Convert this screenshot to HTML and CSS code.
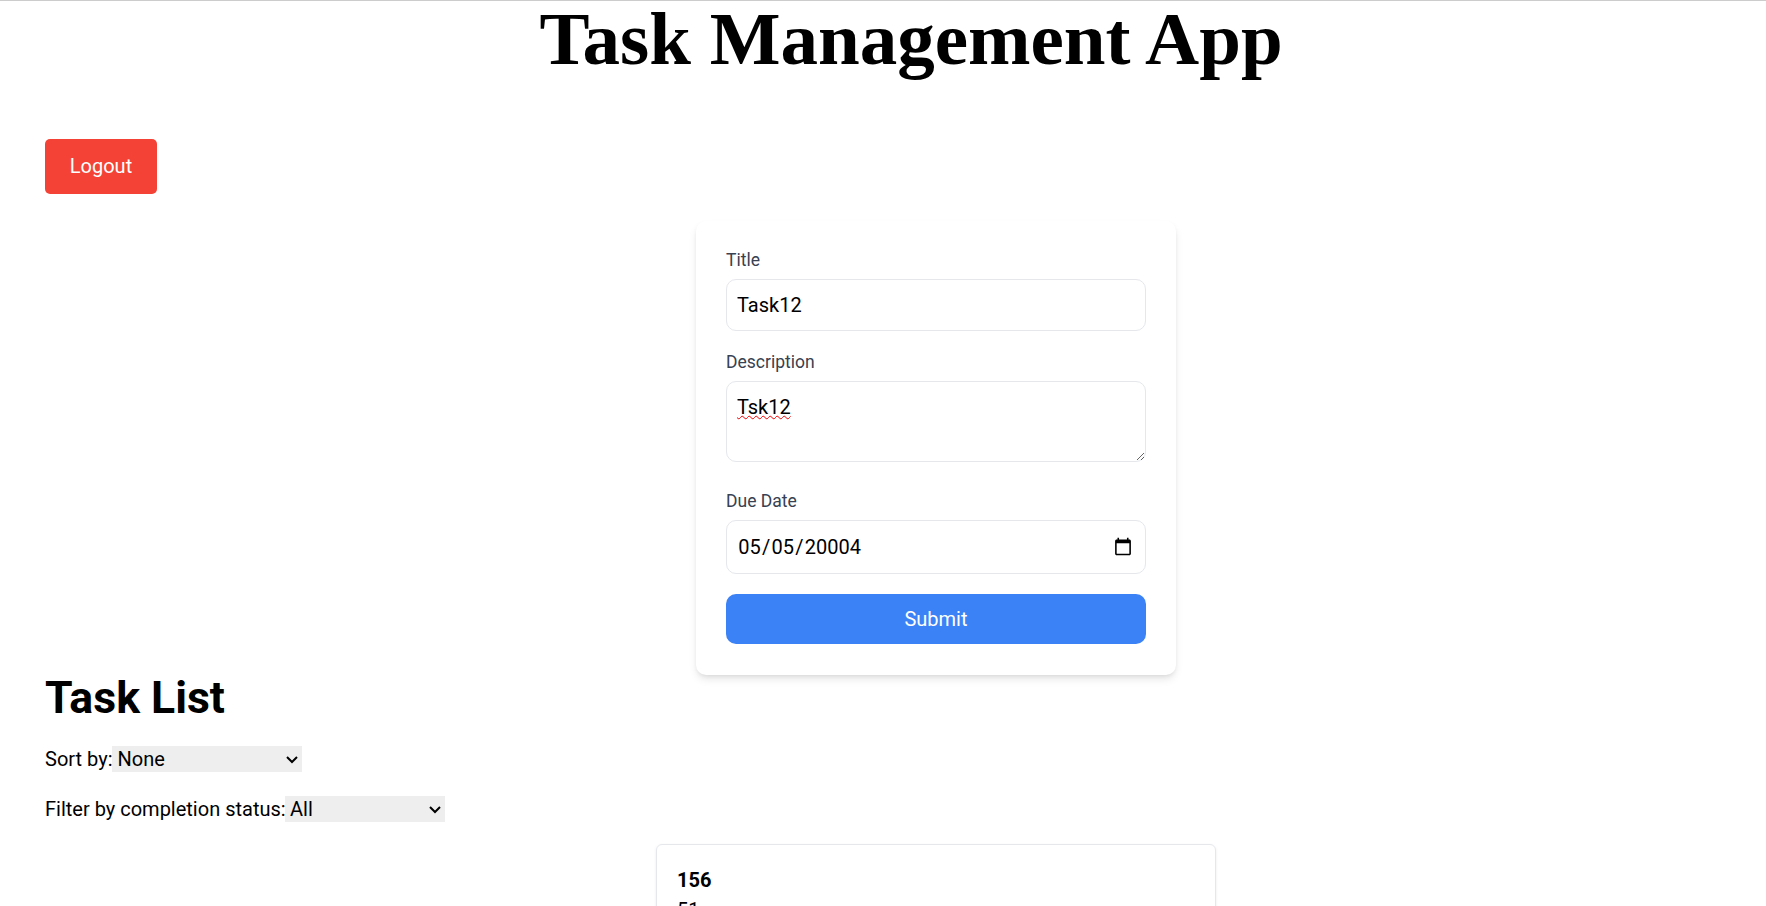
FILE: index.html
```html
<!DOCTYPE html>
<html lang="en">
<head>
    <meta charset="UTF-8">
    <meta name="viewport" content="width=device-width, initial-scale=1.0">
    <title>Task Management App</title>
    <link rel="stylesheet" href="styles.css">
</head>
<body>
    <div class="app">
        <h1 class="app-title">Task Management App</h1>
        <button class="logout-btn" type="button">Logout</button>

        <div class="form-wrap">
            <form class="task-form">
                <div class="field">
                    <label for="title">Title</label>
                    <input id="title" type="text" value="Task12">
                </div>
                <div class="field">
                    <label for="description">Description</label>
                    <textarea id="description">Tsk12</textarea>
                </div>
                <div class="field">
                    <label for="due">Due Date</label>
                    <input id="due" class="date-input" type="date" value="20004-05-05">
                </div>
                <button class="submit-btn" type="button">Submit</button>
            </form>
        </div>

        <h2 class="list-title">Task List</h2>
        <div class="list-control">
            <label for="sort">Sort by:</label><select id="sort" class="sort-select"><option>None</option><option>Due date</option></select>
        </div>
        <div class="list-control">
            <label for="filter">Filter by completion status:</label><select id="filter" class="filter-select"><option>All</option><option>Completed</option></select>
        </div>

        <div class="task-wrap">
            <div class="task-card">
                <h3>156</h3>
                <p>51</p>
            </div>
        </div>
    </div>
</body>
</html>
```

FILE: styles.css
```css
html, body {
    margin: 0;
    padding: 0;
}

body {
    font-family: Roboto, sans-serif;
    color: #000;
    background-color: #fff;
    border-top: 1px solid #ccc;
}

.app {
    box-sizing: border-box;
    height: 905px;
    overflow: hidden;
    padding-left: 45px;
}

.app-title {
    margin: 0 0 0 11px;
    font-family: "Liberation Serif", serif;
    font-size: 75px;
    line-height: 75px;
    font-weight: bold;
    text-align: center;
}

.logout-btn {
    display: block;
    width: 112px;
    height: 55px;
    margin-top: 63px;
    padding: 0 0 2px;
    border: none;
    border-radius: 5px;
    background-color: #f44336;
    color: #fff;
    font-family: Roboto, sans-serif;
    font-size: 20px;
}

/* Formulario */
.form-wrap {
    display: flex;
    justify-content: center;
    margin-top: 27px;
    padding-left: 61px;
}

.task-form {
    box-sizing: border-box;
    width: 480px;
    height: 454px;
    padding: 28px 30px 30px;
    border-radius: 10px;
    background-color: #fff;
    box-shadow: 0 5px 8px -1px rgba(0, 0, 0, 0.1), 0 2px 5px -2px rgba(0, 0, 0, 0.1);
}

.field {
    margin-bottom: 20px;
}

.field label {
    display: block;
    margin-bottom: 8px;
    padding-top: 1px;
    font-size: 17.5px;
    line-height: 21px;
    color: #374151;
}

.field input {
    display: block;
    box-sizing: border-box;
    width: 100%;
    height: 52px;
    padding: 10px;
    border: 1px solid #e5e7eb;
    border-radius: 10px;
    font-family: Roboto, sans-serif;
    font-size: 20px;
    color: #000;
    outline: none;
}

/* los controles nativos van con zoom para que el icono y el asa salgan al mismo tamaño */
.field textarea {
    display: block;
    zoom: 1.25;
    box-sizing: border-box;
    width: 100%;
    height: 64.8px;
    margin-bottom: 22.4px;
    padding: 10.4px 8px 8px;
    border: 1px solid #e5e7eb;
    border-radius: 8px;
    font-family: Roboto, sans-serif;
    font-size: 16px;
    color: #000;
    outline: none;
    text-decoration: underline wavy #f00000 1px;
    text-decoration-skip-ink: none;
}

.field .date-input {
    zoom: 1.25;
    height: 43.2px;
    padding: 8px;
    border-radius: 8px;
    font-size: 16px;
}

.submit-btn {
    display: block;
    width: 100%;
    height: 50px;
    padding: 0;
    border: none;
    border-radius: 10px;
    background-color: #3b82f6;
    color: #fff;
    font-family: Roboto, sans-serif;
    font-size: 20px;
}

/* Lista de tareas */
.list-title {
    margin: 0 0 25px;
    font-size: 44.6px;
    line-height: 46px;
    font-weight: bold;
}

.list-control {
    margin-bottom: 24px;
    font-size: 20px;
    line-height: 26px;
}

.list-control select {
    zoom: 1.25;
    height: 20.8px;
    border: none;
    padding: 0;
    background-color: #eee;
    font-family: Roboto, sans-serif;
    font-size: 16px;
    color: #000;
    vertical-align: bottom;
}

.sort-select {
    width: 152px;
}

.filter-select {
    width: 128px;
    margin-left: -0.5px;
}

.task-wrap {
    display: flex;
    justify-content: center;
    margin-top: -2px;
    padding-left: 61px;
}

.task-card {
    box-sizing: border-box;
    width: 560px;
    padding: 20px;
    border: 1px solid #e5e7eb;
    border-radius: 6px;
    box-shadow: 0 1px 3px rgba(0, 0, 0, 0.08);
}

.task-card h3 {
    margin: 0;
    font-size: 20px;
    line-height: 30px;
    font-weight: bold;
}

.task-card p {
    margin: 0;
    font-size: 20px;
    line-height: 30px;
}
```
